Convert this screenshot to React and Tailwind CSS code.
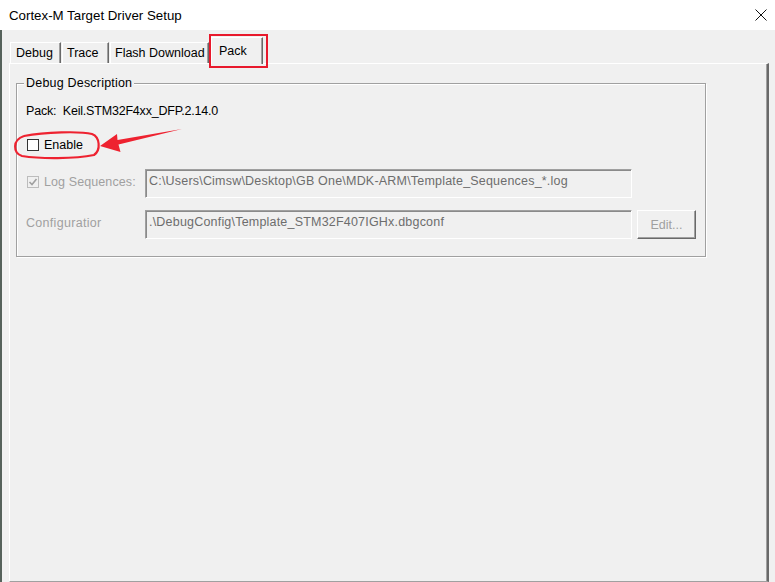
import React from 'react';

const font = { fontFamily: '"Liberation Sans", Arial, sans-serif' };

function Tab({ label, width, pl, selected }) {
  if (selected) {
    return (
      <div
        className={`relative z-10 -mb-px ml-[2px] h-[27px] ${width} ${pl} border-l border-t border-white border-r border-r-[#696969] shadow-[inset_-1px_0_0_#a0a0a0] bg-[#f0f0f0] pt-[6px] leading-[15px]`}
      >
        {label}
      </div>
    );
  }
  return (
    <div
      className={`ml-px h-[21px] ${width} ${pl} border-l border-t border-white border-r border-r-[#696969] shadow-[inset_-1px_0_0_#a0a0a0] pt-[3px] leading-[15px]`}
    >
      {label}
    </div>
  );
}

function CheckBox({ checked, disabled }) {
  return (
    <div
      className={`w-[12px] h-[12px] border flex items-center justify-center ${
        disabled ? 'border-[#bcbcbc] bg-[#f0f0f0]' : 'border-[#333333] bg-white'
      }`}
    >
      {checked && (
        <svg width="10" height="10" viewBox="0 0 10 10">
          <path d="M1.5 5 L4 7.5 L8.5 2" fill="none" stroke="#a0a0a0" strokeWidth="1.6" />
        </svg>
      )}
    </div>
  );
}

function EditBox({ value }) {
  return (
    <div className="w-[487px] h-[29px] border-t border-l border-[#a0a0a0] border-b border-r border-b-white border-r-white shadow-[inset_1px_1px_0_#8a8a8a] pl-[3px] pt-[4px] leading-[15px] text-[#6d6d6d] tracking-[0.2px] whitespace-nowrap overflow-hidden">
      {value}
    </div>
  );
}

export default function App() {
  return (
    <div className="relative w-[775px] h-[582px] overflow-hidden flex flex-col bg-[#f0f0f0] text-[12.5px] text-black" style={font}>
      {/* title bar */}
      <div className="h-[30px] bg-white flex items-center justify-between pl-[9px] pr-[8px]">
        <span className="text-[13.3px] leading-[15px] pt-px">Cortex-M Target Driver Setup</span>
        <svg width="12" height="12" viewBox="0 0 12 12">
          <path d="M0.5 0.5 L11.5 11.5 M11.5 0.5 L0.5 11.5" stroke="#111" strokeWidth="1" />
        </svg>
      </div>

      <div className="flex-1 flex">
        <div className="w-[2px] bg-[#56625b]" />
        <div className="flex-1 flex flex-col pl-[7px]">
          {/* tabs */}
          <div className="mt-[7px] h-[26px] flex items-end">
            <Tab label="Debug" width="w-[51px]" pl="pl-[5px]" />
            <Tab label="Trace" width="w-[47px]" pl="pl-[4px]" />
            <Tab label="Flash Download" width="w-[99px]" pl="pl-[4px]" />
            <Tab label="Pack" width="w-[52px]" pl="pl-[7px]" selected />
          </div>

          {/* panel */}
          <div className="flex-1 w-[760px] border-l border-t border-white border-r-2 border-r-[#696969] shadow-[inset_-1px_0_0_#a0a0a0] border-b border-b-[#a0a0a0] pl-[6px] pt-[19px]">
            <div className="relative w-[690px] border border-[#a0a0a0] shadow-[1px_1px_0_#fff,inset_1px_1px_0_#fff] pl-[9px] pt-[20px] pb-[17px]">
              <div className="absolute left-[7px] top-[-8px] px-[2px] bg-[#f0f0f0] leading-[15px] tracking-[0.2px]">
                Debug Description
              </div>

              <div className="h-[15px] leading-[15px] tracking-[-0.2px]">Pack:&nbsp; Keil.STM32F4xx_DFP.2.14.0</div>

              <div className="mt-[18px] h-[15px] flex items-center">
                <div className="ml-px">
                  <CheckBox />
                </div>
                <span className="ml-[5px] leading-[15px] pt-[2px]">Enable</span>
              </div>

              <div className="mt-[17px] flex">
                <div className="w-[119px] h-[15px] mt-[5px] flex items-center">
                  <div className="ml-px">
                    <CheckBox checked disabled />
                  </div>
                  <span className="ml-[5px] leading-[15px] pt-px text-[#a0a0a0] tracking-[0.1px]">Log Sequences:</span>
                </div>
                <EditBox value="C:\Users\Cimsw\Desktop\GB One\MDK-ARM\Template_Sequences_*.log" />
              </div>

              <div className="mt-[12px] flex">
                <div className="w-[119px] h-[15px] mt-[6px] leading-[15px] text-[#a0a0a0] tracking-[0.3px]">
                  Configuratior
                </div>
                <EditBox value=".\DebugConfig\Template_STM32F407IGHx.dbgconf" />
                <div className="ml-[5px] w-[59px] h-[29px] border-t border-l border-white border-b border-r border-b-[#696969] border-r-[#696969] shadow-[inset_-1px_-1px_0_#a0a0a0] flex items-center justify-center text-[#a0a0a0] pt-px">
                  Edit...
                </div>
              </div>
            </div>
          </div>
        </div>
      </div>

      {/* red annotations */}
      <svg className="absolute left-0 top-0 pointer-events-none" width="775" height="582" viewBox="0 0 775 582">
        <rect x="210" y="35" width="57" height="32" fill="none" stroke="#e8192c" strokeWidth="2" />
        <path
          d="M24 136 C45 132, 80 131, 92 134 C100 137, 101 150, 94 155 C75 159, 40 159, 22 156 C13 153, 12 140, 24 136"
          fill="none"
          stroke="#ee2230"
          strokeWidth="2.2"
        />
        <polygon points="100,146 117,134 117.5,140 182,129 118.5,144.5 120.5,152" fill="#ee2230" />
      </svg>
    </div>
  );
}
